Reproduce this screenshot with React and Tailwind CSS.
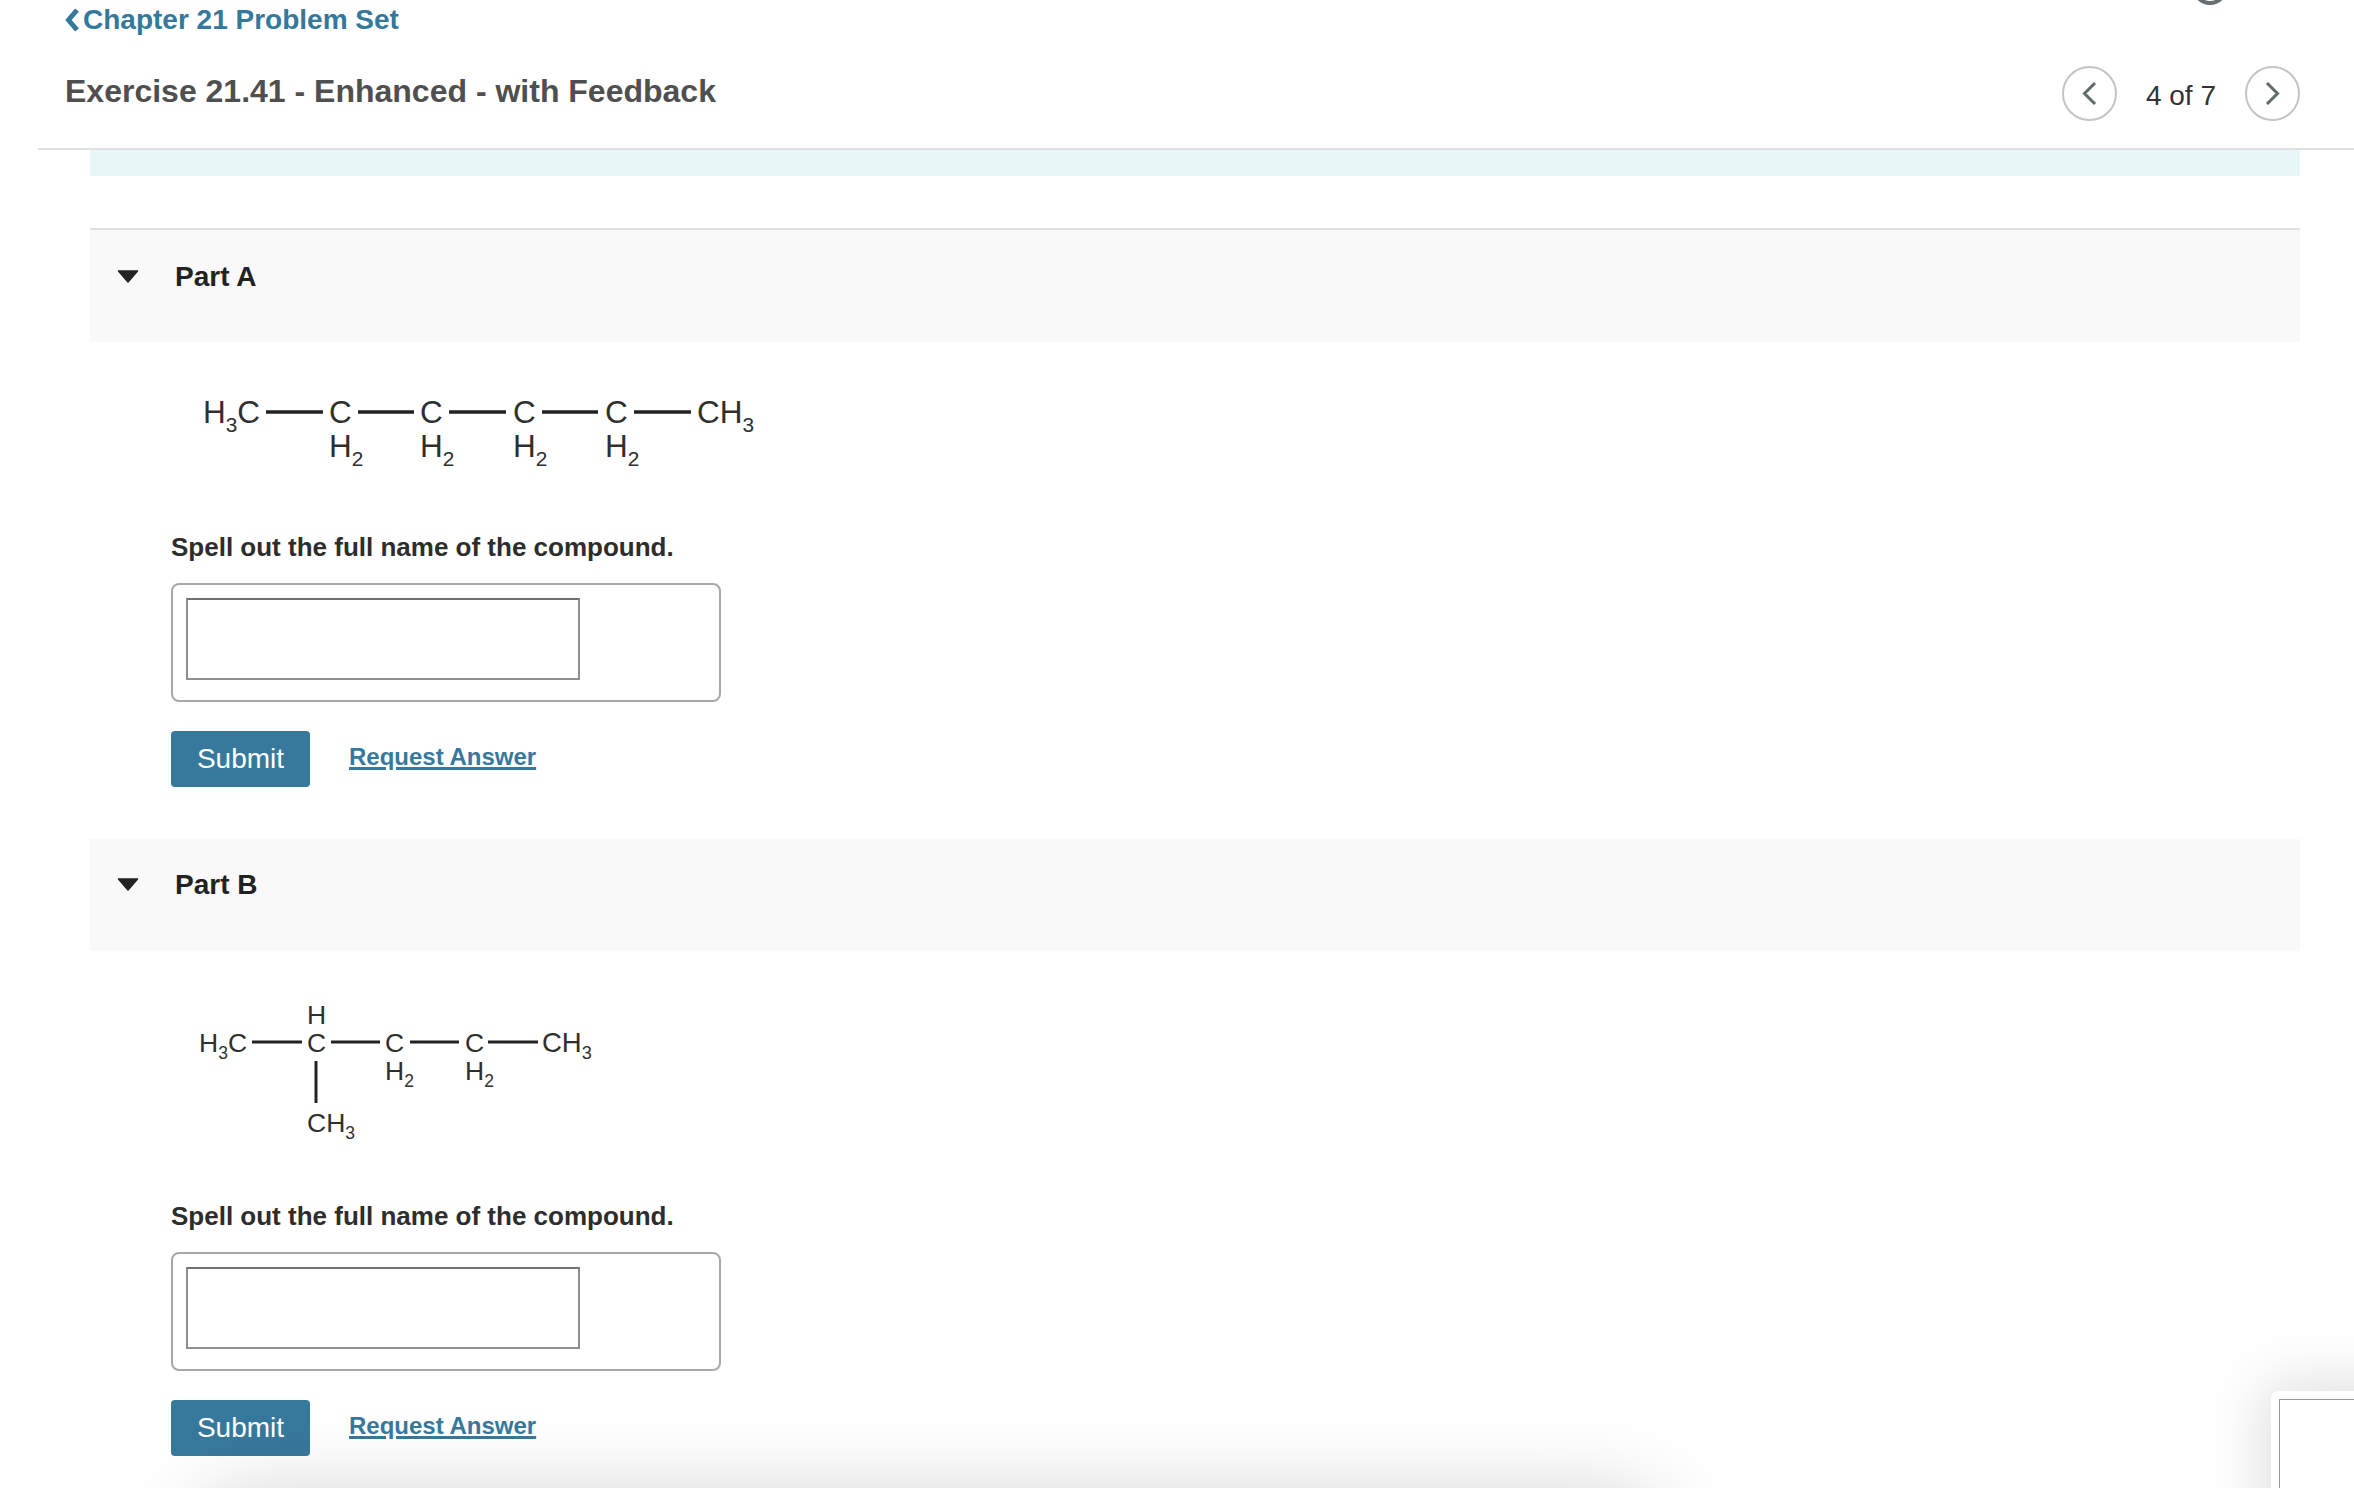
import React from 'react';

// atom label with an optional subscript, e.g. H3C or CH3
const Atom = ({ x, y, size, parts }) => (
  <text x={x} y={y} fontSize={size} fill="#2f2f2f">
    {parts.map((p, i) =>
      p.sub ? (
        <tspan key={i} fontSize={size * 0.66} dy={size * 0.27}>{p.sub}</tspan>
      ) : (
        <tspan key={i} dy={i > 0 && parts[i - 1].sub ? -size * 0.27 : 0}>{p.t}</tspan>
      )
    )}
  </text>
);

const Bond = ({ x1, y1, x2, y2, w = 3.5 }) => (
  <line x1={x1} y1={y1} x2={x2} y2={y2} stroke="#222222" strokeWidth={w} />
);

const MoleculeA = () => {
  const carbons = [329, 420, 513, 605];
  const bonds = [[266, 323], [358, 414], [449, 506], [542, 598], [634, 691]];
  return (
    <svg width="600" height="90" viewBox="191 390 600 90" className="block ml-[20px]">
      <Atom x={203} y={423} size={31.5} parts={[{ t: 'H' }, { sub: '3' }, { t: 'C' }]} />
      {bonds.map(([a, b]) => <Bond key={a} x1={a} y1={412} x2={b} y2={412} />)}
      {carbons.map(x => (
        <g key={x}>
          <Atom x={x} y={423} size={31.5} parts={[{ t: 'C' }]} />
          <Atom x={x} y={457} size={31.5} parts={[{ t: 'H' }, { sub: '2' }]} />
        </g>
      ))}
      <Atom x={697} y={423} size={31.5} parts={[{ t: 'CH' }, { sub: '3' }]} />
    </svg>
  );
};

const MoleculeB = () => {
  const bonds = [[252, 302], [331, 380], [410, 459], [488, 538]];
  return (
    <svg width="500" height="149" viewBox="191 1000 500 149" className="block ml-[20px]">
      <Atom x={199} y={1052} size={26.5} parts={[{ t: 'H' }, { sub: '3' }, { t: 'C' }]} />
      {bonds.map(([a, b]) => <Bond key={a} x1={a} y1={1042} x2={b} y2={1042} w={3} />)}
      <Atom x={307} y={1024} size={26.5} parts={[{ t: 'H' }]} />
      <Atom x={307} y={1052} size={26.5} parts={[{ t: 'C' }]} />
      <Atom x={385} y={1052} size={26.5} parts={[{ t: 'C' }]} />
      <Atom x={465} y={1052} size={26.5} parts={[{ t: 'C' }]} />
      <Atom x={385} y={1080} size={26.5} parts={[{ t: 'H' }, { sub: '2' }]} />
      <Atom x={465} y={1080} size={26.5} parts={[{ t: 'H' }, { sub: '2' }]} />
      <Atom x={542} y={1052} size={27.5} parts={[{ t: 'CH' }, { sub: '3' }]} />
      <Bond x1={316} y1={1061} x2={316} y2={1103} w={3} />
      <Atom x={307} y={1132} size={26.5} parts={[{ t: 'CH' }, { sub: '3' }]} />
    </svg>
  );
};

const PartHeader = ({ label, className }) => (
  <div className={`flex items-start bg-[#f9f9f9] pl-[27px] ${className}`}>
    <svg width="22" height="13" viewBox="0 0 22 13" className="mt-[9px] mr-[36px]">
      <path d="M1.5 1 H20.5 L11 12 Z" fill="#222222" stroke="#222222" strokeWidth="1.5" strokeLinejoin="round" />
    </svg>
    <span className="text-[28px] leading-[32px] font-bold text-[#222222]">{label}</span>
  </div>
);

const AnswerForm = () => (
  <>
    <p className="mt-[51px] text-[26px] leading-[32px] font-bold text-[#2d2d2d]">
      Spell out the full name of the compound.
    </p>
    <div className="mt-[20px] w-[550px] h-[119px] border-2 border-[#a8a8a8] rounded-lg pl-[13px] pt-[13px]">
      <input
        type="text"
        className="block w-[394px] h-[82px] bg-white border-2 border-[#8f8f8f] border-t-[#707070] outline-none"
      />
    </div>
    <div className="mt-[29px] flex items-center">
      <button className="w-[139px] h-[56px] rounded bg-[#37799c] text-white text-[28px]">Submit</button>
      <a href="#" className="ml-[39px] mb-[4px] text-[24px] leading-[28px] font-bold text-[#37799c] underline decoration-[3px] underline-offset-2">
        Request Answer
      </a>
    </div>
  </>
);

export default function App() {
  return (
    <div className="relative h-[1488px] w-full overflow-hidden bg-white font-['Liberation_Sans',Arial,sans-serif]">
      {/* clipped ring at the top */}
      <div className="absolute left-[2192px] top-[-31px] w-[36px] h-[36px] rounded-full border-4 border-[#666e70]"></div>

      <div className="h-[40px] pl-[65px] flex items-center">
        <svg width="14" height="24" viewBox="0 0 14 24" className="mr-[4px]">
          <path d="M12 2 L3.5 12 L12 22" fill="none" stroke="#34789b" strokeWidth="5" />
        </svg>
        <a href="#" className="text-[28px] font-bold text-[#34789b]">Chapter 21 Problem Set</a>
      </div>

      <div className="ml-[38px] h-[110px] border-b-2 border-[#e0e0e0] pl-[27px] pr-[54px] pt-[6px] flex items-start justify-between">
        <h1 className="text-[32px] leading-[38px] mt-[26px] font-bold text-[#4f4f4f]">Exercise 21.41 - Enhanced - with Feedback</h1>
        <div className="flex items-center mt-[20px]">
          <button className="w-[55px] h-[55px] rounded-full border-2 border-[#c4c4c4] flex items-center justify-center">
            <svg width="15" height="25" viewBox="0 0 15 25">
              <path d="M13 2 L2.5 12.5 L13 23" fill="none" stroke="#5f6b6d" strokeWidth="3" />
            </svg>
          </button>
          <span className="mx-[29px] mt-[5px] text-[28px] text-[#333333]">4 of 7</span>
          <button className="w-[55px] h-[55px] rounded-full border-2 border-[#c4c4c4] flex items-center justify-center">
            <svg width="15" height="25" viewBox="0 0 15 25">
              <path d="M2 2 L12.5 12.5 L2 23" fill="none" stroke="#5f6b6d" strokeWidth="3" />
            </svg>
          </button>
        </div>
      </div>

      <div className="ml-[90px] mr-[54px]">
        <div className="h-[26px] bg-[#e7f6f7]"></div>

        <PartHeader label="Part A" className="h-[114px] mt-[52px] border-t-2 border-[#e0e0e0] pt-[31px]" />
        <div className="pl-[81px]">
          <div className="pt-[48px]"><MoleculeA /></div>
          <AnswerForm />
        </div>

        <PartHeader label="Part B" className="h-[112px] mt-[52px] pt-[30px]" />
        <div className="pl-[81px]">
          <div className="pt-[49px]"><MoleculeB /></div>
          <AnswerForm />
        </div>
      </div>

      {/* shadow of the panel below the fold */}
      <div className="absolute left-[230px] top-[1530px] w-[1400px] h-[200px] rounded-xl bg-white shadow-[0_0_90px_30px_rgba(0,0,0,0.2)]"></div>

      {/* card peeking in at the bottom right */}
      <div className="absolute left-[2271px] top-[1391px] w-[200px] h-[200px] rounded-lg bg-white p-[8px] shadow-[0_0_60px_10px_rgba(0,0,0,0.12)]">
        <div className="w-full h-full border border-[#999999]"></div>
      </div>
    </div>
  );
}
